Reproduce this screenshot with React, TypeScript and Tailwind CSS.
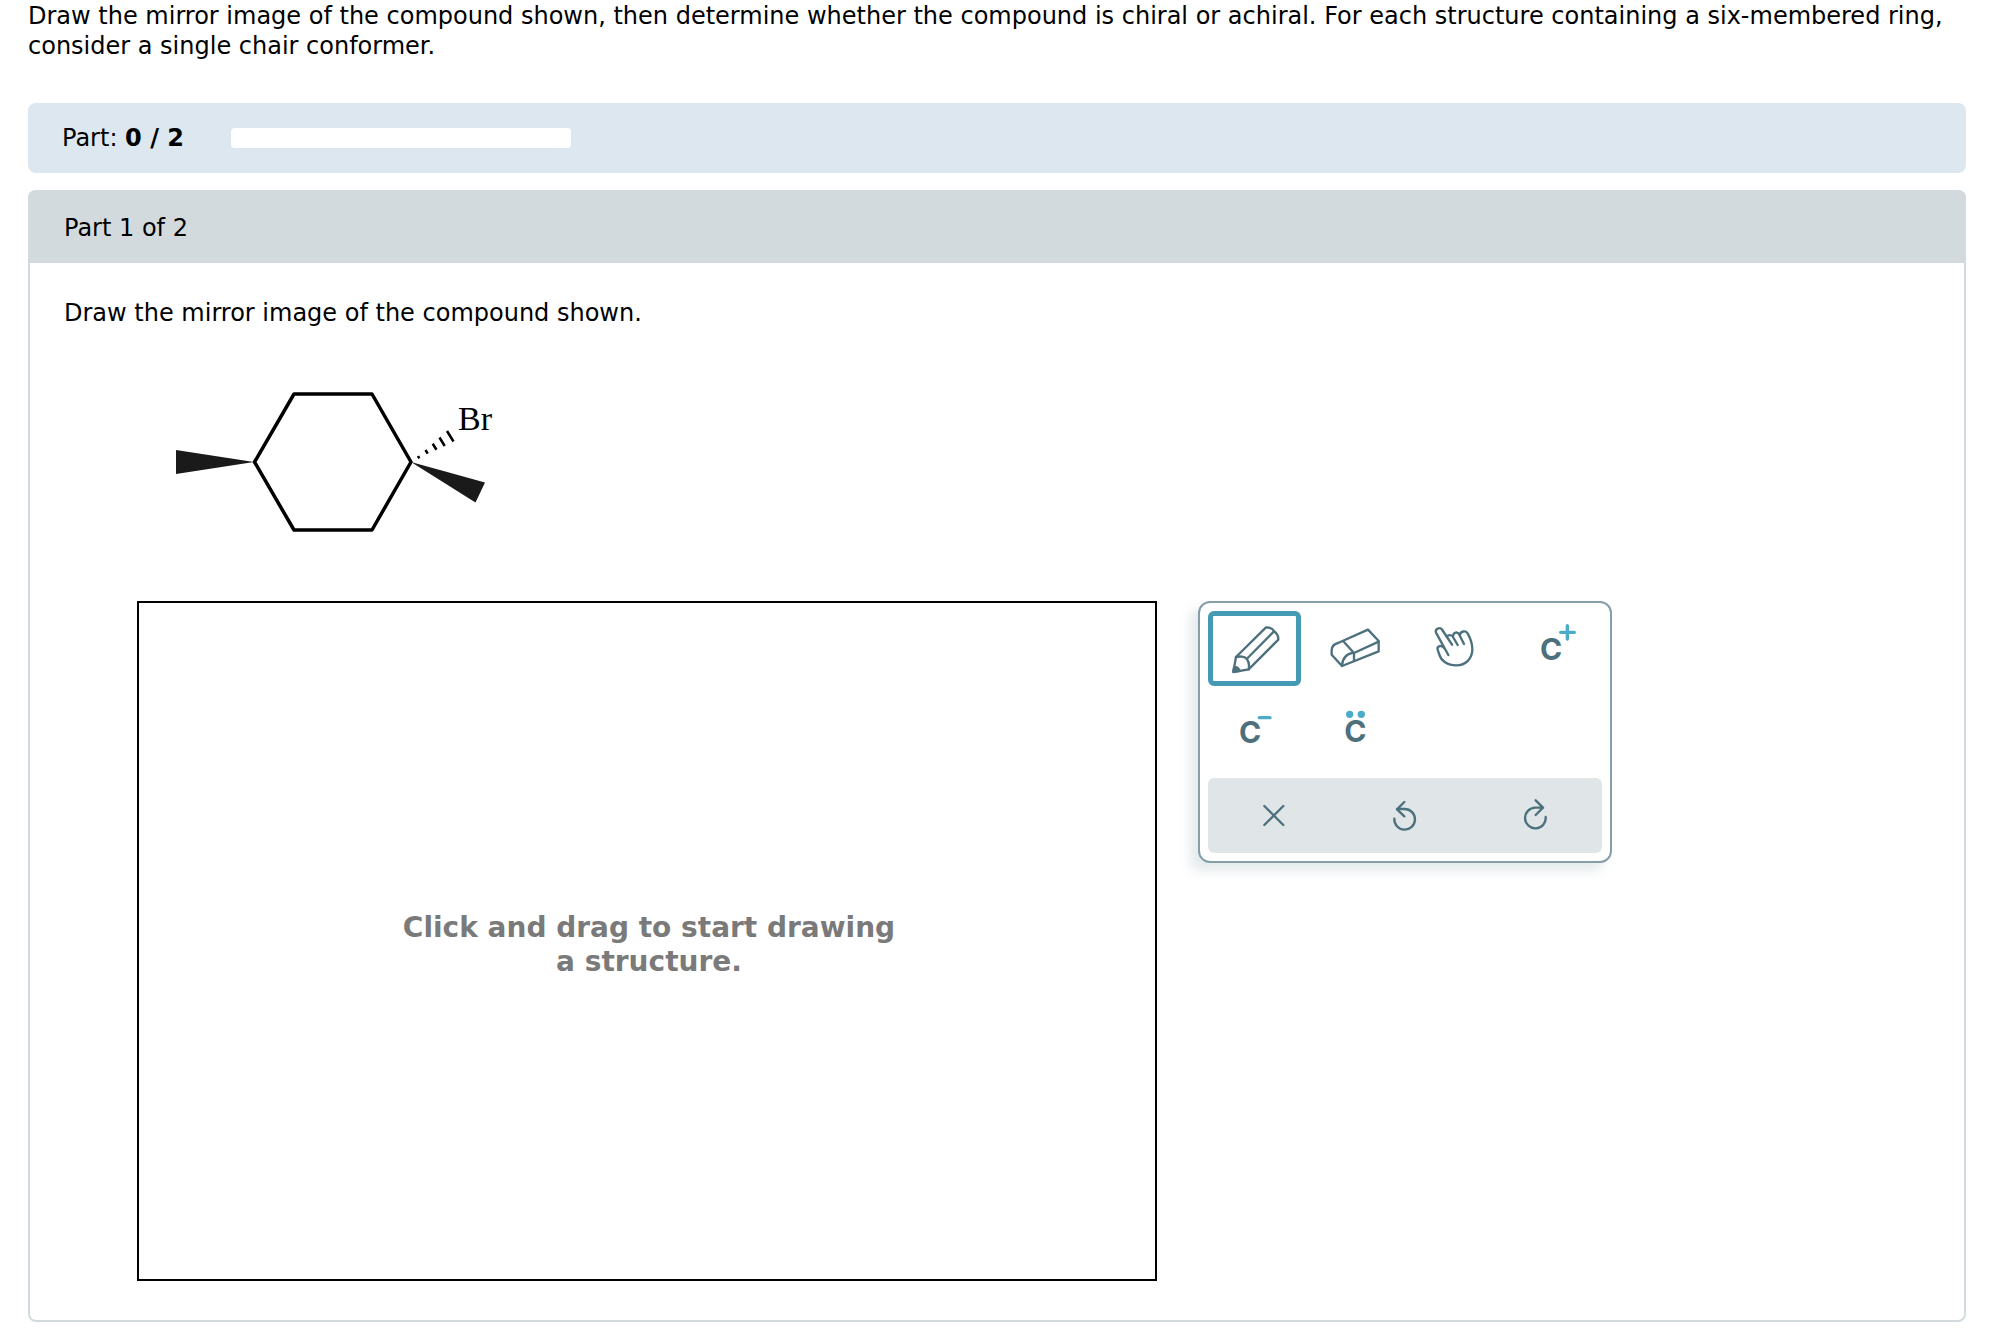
import type { ReactNode } from "react";

const INK = "#4d707d";
const ACCENT = "#4cabc8";

function ToolButton({
  label,
  viewBox,
  selected = false,
  children,
}: {
  label: string;
  viewBox: string;
  selected?: boolean;
  children: ReactNode;
}) {
  return (
    <button
      type="button"
      aria-label={label}
      aria-pressed={selected}
      className={
        selected
          ? "flex h-[75px] items-center justify-center rounded-md border-5 border-[#459ab3]"
          : "flex h-[75px] items-center justify-center rounded-md border-5 border-transparent"
      }
    >
      <svg
        className="size-14"
        viewBox={viewBox}
        fill="none"
        stroke={INK}
        strokeWidth="7"
        strokeLinecap="round"
        strokeLinejoin="round"
      >
        {children}
      </svg>
    </button>
  );
}

function ActionButton({ label, viewBox, children }: { label: string; viewBox: string; children: ReactNode }) {
  return (
    <button type="button" aria-label={label} className="flex h-[75px] items-center justify-center">
      <svg
        className="size-10"
        viewBox={viewBox}
        fill="none"
        stroke={INK}
        strokeWidth="7"
        strokeLinecap="round"
        strokeLinejoin="round"
      >
        {children}
      </svg>
    </button>
  );
}

function Carbon({ x, y }: { x: number; y: number }) {
  return (
    <text
      x={x}
      y={y}
      textAnchor="middle"
      fill={INK}
      stroke="none"
      fontSize="90"
      className="font-['Inter',sans-serif] font-bold"
    >
      C
    </text>
  );
}

function Molecule() {
  return (
    <svg className="h-[144px] w-[324px]" viewBox="174 390 324 144" role="img" aria-label="Structure of the compound">
      <g fill="none" stroke="#000" strokeWidth="3.500" strokeLinejoin="round" strokeLinecap="round">
        <path d="M294 394H372L411 462L372 530H294L254.500 462Z" />
        <g strokeLinecap="butt" strokeWidth="2.500">
          <path d="M418 456L419.300 458.300M425.500 450L427.700 453.700M432.700 443.800L436.500 449.700M439.500 437.500L444.700 446M447 431L453.500 441.500" />
        </g>
      </g>
      <path fill="#1a1a1a" d="M176 450L254 462L176 474ZM411 462L485 482.500L475.500 502.500Z" />
      <text x="458" y="430" fontSize="34" className="font-['Liberation_Serif',serif]">
        Br
      </text>
    </svg>
  );
}

function Toolbox() {
  return (
    <div className="w-[414px] rounded-xl border-2 border-[#869ea8] bg-white p-2 shadow-[-8px_8px_12px_rgba(77,112,125,0.15)]">
      <div className="grid grid-cols-4 gap-2">
        <ToolButton label="Pencil" viewBox="109 80 168 168" selected>
          <path d="M131 233L139 188L229 99C242 99 250 104 253 111C262 117 266 126 266 136L177 225Z" />
          <path d="M139 188C150 185 166 186 171 194C179 202 179 214 177 225M171 194L253 111" />
          <path fill={INK} d="M131 232L133 220C141 216 150 222 147 230Z" />
        </ToolButton>
        <ToolButton label="Eraser" viewBox="411 80 168 168">
          <path d="M534 106L566 140V171L456 215L425 181V167C426 154 432 149 444 146Z" />
          <path d="M460 141L492 176L566 142M492 176V200M456 215C457 190 468 178 492 175" />
        </ToolButton>
        <ToolButton label="Move" viewBox="82 80 168 168">
          <path d="M146 182L109 115C105 104 121 96 128 107L157 151" />
          <path d="M141 127C147 121 156 121 160 128L174 152M160 126C161 113 174 111 179 121L193 149M181 121C183 110 198 108 204 117C213 133 218 148 218 165C218 193 198 213 170 213C143 213 124 199 119 181L114 166C111 155 126 151 132 160" />
        </ToolButton>
        <ToolButton label="Add positive charge" viewBox="384 80 168 168">
          <Carbon x={453} y={196} />
          <path stroke={ACCENT} strokeWidth="10" d="M482 114H523M502 94V134" />
        </ToolButton>
        <ToolButton label="Add negative charge" viewBox="108 330 168 168">
          <Carbon x={180} y={448} />
          <path stroke={ACCENT} strokeWidth="10" d="M208 371H240" />
        </ToolButton>
        <ToolButton label="Add lone pair" viewBox="410 330 168 168">
          <Carbon x={495} y={443} />
          <g fill={ACCENT} stroke="none">
            <circle cx="478" cy="361" r="11" />
            <circle cx="513" cy="361" r="11" />
          </g>
        </ToolButton>
      </div>
      <div className="mt-[9px] grid grid-cols-3 rounded-md bg-[#e0e5e7]">
        <ActionButton label="Clear" viewBox="191 110 120 120">
          <path d="M222 140L279 197M279 140L222 197" />
        </ActionButton>
        <ActionButton label="Undo" viewBox="585 110 120 120">
          <path d="M613 178A31 31 0 1 0 644 149H621M643 128L621 150L643 171" />
        </ActionButton>
        <ActionButton label="Redo" viewBox="979 110 120 120">
          <path d="M1068 173A31 31 0 1 1 1037 145H1060M1038 123L1060 145L1038 167" />
        </ActionButton>
      </div>
    </div>
  );
}

export default function App() {
  return (
    <main className="bg-white pt-px pr-12 pb-2 pl-7 font-['DejaVu_Sans',sans-serif] text-2xl leading-[30px] text-black">
      <p>
        Draw the mirror image of the compound shown, then determine whether the compound is chiral or achiral. For each
        structure containing a six-membered ring, consider a single chair conformer.
      </p>

      <div className="mt-[42px] flex h-[70px] items-center gap-[47px] rounded-lg bg-[#dde7ef] px-[34px]">
        <p>
          Part: <b>0 / 2</b>
        </p>
        <div
          role="progressbar"
          aria-label="Parts completed"
          aria-valuemin={0}
          aria-valuemax={2}
          aria-valuenow={0}
          className="h-5 w-[340px] rounded bg-white"
        />
      </div>

      <section className="mt-[17px] rounded-lg border-2 border-t-0 border-[#d3dadd]">
        <h2 className="-mx-0.5 flex h-[73px] items-center rounded-t-lg bg-[#d3dadd] px-9 pt-0.5">Part 1 of 2</h2>
        <div className="px-[34px] pt-[35px] pb-[39px]">
          <p>Draw the mirror image of the compound shown.</p>
          <div className="mt-[62px] ml-[110px]">
            <Molecule />
          </div>
          <div className="mt-[67px] ml-[73px] flex items-start gap-[41px]">
            <div className="flex h-[680px] w-[1020px] items-center justify-center border-2 border-black pt-2 pl-1">
              <p className="w-[500px] text-center text-[28px] leading-[34px] font-bold text-[#7a7a7a]">
                Click and drag to start drawing a structure.
              </p>
            </div>
            <Toolbox />
          </div>
        </div>
      </section>
    </main>
  );
}
